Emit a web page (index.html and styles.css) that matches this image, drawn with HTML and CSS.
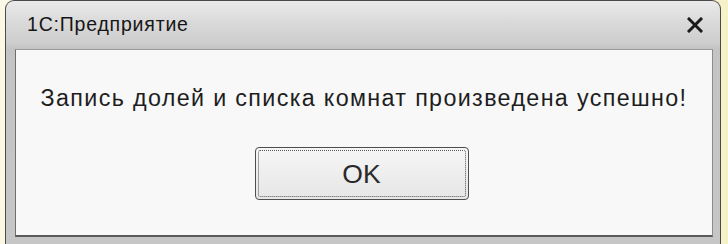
FILE: index.html
```html
<!DOCTYPE html>
<html lang="ru">
<head>
<meta charset="utf-8">
<title>1С:Предприятие</title>
<link rel="stylesheet" href="styles.css">
</head>
<body>
<div class="desk">
  <div class="window">
    <div class="titlebar">
      <span class="title">1С:Предприятие</span>
      <svg class="close" width="16" height="16" viewBox="0 0 16 16" aria-label="Закрыть">
        <path d="M2 2 L14 14 M14 2 L2 14" stroke="#1a1a1a" stroke-width="3" stroke-linecap="square" fill="none"/>
      </svg>
    </div>
    <div class="content">
      <p class="message">Запись долей и списка комнат произведена успешно!</p>
      <button class="ok"><span class="focus">OK</span></button>
    </div>
  </div>
</div>
</body>
</html>
```

FILE: styles.css
```css
html, body {
  margin: 0;
  padding: 0;
  height: 244px;
  overflow: hidden;
}
body {
  background: linear-gradient(90deg, #fbf9e6 0, #fbf9e6 50%, #f7f1c8 100%);
  font-family: "Liberation Sans", Arial, sans-serif;
}
.desk {
  display: flex;
  padding-left: 5px;
  height: 244px;
}
.window {
  width: 716px;
  height: 244px;
  border: 1px solid #4a4a4a;
  border-bottom: none;
  border-radius: 9px 9px 0 0;
  background: linear-gradient(180deg, #ebebeb 0, #dcdcdc 18px, #cdcdcd 42px, #c4c4c4 48px, #c6c6c6 100%);
  display: flex;
  flex-direction: column;
  padding: 0 7px 0 9px;
  box-sizing: border-box;
}
.titlebar {
  height: 48px;
  flex: none;
  display: flex;
  align-items: center;
  justify-content: space-between;
  padding: 0 10px 2px 12px;
  box-sizing: border-box;
}
.title {
  font-size: 19.5px;
  color: #161616;
  letter-spacing: 0.8px;
}
.close {
  display: block;
  margin-top: 2px;
}
.content {
  height: 188px;
  flex: none;
  background: #f8f8f8;
  border-top: 1px solid #9a9a9a;
  border-left: 1px solid #6e6e6e;
  border-right: 1px solid #8c8c8c;
  border-bottom: 2px solid #5a5a5a;
  box-sizing: border-box;
  display: flex;
  flex-direction: column;
  align-items: center;
}
.message {
  margin: 34px 0 0 0;
  font-size: 23.3px;
  color: #1e1e1e;
  letter-spacing: 1.35px;
  line-height: 28px;
}
.ok {
  margin-top: 35px;
  margin-right: 5px;
  width: 214px;
  height: 53px;
  flex: none;
  padding: 2px;
  border: 1px solid #4e4e4e;
  border-radius: 4px;
  background: linear-gradient(180deg, #f6f6f6 0, #eeeeee 50%, #e6e6e6 100%);
  box-sizing: border-box;
  font-family: "Liberation Sans", Arial, sans-serif;
  display: flex;
}
.focus {
  flex: 1;
  border: 1px dotted #555;
  border-radius: 2px;
  display: flex;
  align-items: center;
  justify-content: center;
  font-size: 26.5px;
  color: #2a2a2a;
  padding-top: 1px;
}
```
